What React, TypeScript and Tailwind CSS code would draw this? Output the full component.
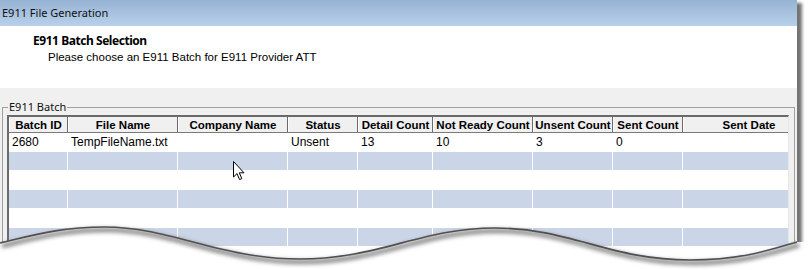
const COLUMNS = [
  { label: "Batch ID", width: 59 },
  { label: "File Name", width: 110 },
  { label: "Company Name", width: 110 },
  { label: "Status", width: 70 },
  { label: "Detail Count", width: 75 },
  { label: "Not Ready Count", width: 100 },
  { label: "Unsent Count", width: 80 },
  { label: "Sent Count", width: 70 },
  { label: "Sent Date", width: 132 },
];

const ROWS: string[][] = [
  ["2680", "TempFileName.txt", "", "Unsent", "13", "10", "3", "0", ""],
  ["", "", "", "", "", "", "", "", ""],
  ["", "", "", "", "", "", "", "", ""],
  ["", "", "", "", "", "", "", "", ""],
  ["", "", "", "", "", "", "", "", ""],
  ["", "", "", "", "", "", "", "", ""],
  ["", "", "", "", "", "", "", "", ""],
];

const WAVE =
  "M0,243 C30,236 60,227 105,227 C170,227 220,259 300,259 C380,259 420,228 495,228 C570,228 610,260 690,260 C740,260 770,250 797,242";

function TornEdge() {
  return (
    <svg
      className="absolute inset-0 pointer-events-none"
      width="808"
      height="270"
      viewBox="0 0 808 270"
      aria-hidden="true"
    >
      <defs>
        <filter id="blur" x="-5%" y="-50%" width="110%" height="200%">
          <feGaussianBlur stdDeviation="2" />
        </filter>
      </defs>
      <path d={`${WAVE} L808,242 L808,270 L0,270 Z`} fill="#ffffff" />
      <path d={WAVE} transform="translate(2,3)" fill="none" stroke="#7a7a7a" strokeWidth="4" filter="url(#blur)" />
      <path d={WAVE} fill="none" stroke="#505050" strokeWidth="1.6" />
    </svg>
  );
}

function Cursor() {
  return (
    <svg className="absolute left-[233px] top-[161px]" width="13" height="20" viewBox="0 0 13 20" aria-hidden="true">
      <path
        d="M0.5,0.5 L0.5,16 L4,12.6 L6.6,18.6 L8.8,17.6 L6.3,11.8 L11,11.8 Z"
        fill="#ffffff"
        stroke="#000000"
        strokeWidth="1"
        strokeLinejoin="miter"
      />
    </svg>
  );
}

export default function App() {
  return (
    <div className="relative w-[808px] h-[270px] bg-white overflow-hidden font-['Liberation_Sans',Arial,sans-serif] text-[12px] text-black">
      <div className="w-[797px] h-[270px] flex flex-col shadow-[5px_3px_3px_rgba(0,0,0,0.55)]">
        <div className="h-[26px] shrink-0 flex items-center pl-[2px] bg-gradient-to-b from-[#97b3d3] to-[#b8d0ea] font-['Noto_Sans',sans-serif] text-[11px] text-[#111]">
          E911 File Generation
        </div>
        <div className="h-[62px] shrink-0 bg-white pt-[5px]">
          <div className="pl-[33px] font-['Noto_Sans',sans-serif] font-bold text-[12px] leading-[20px] tracking-[-0.45px]">
            E911 Batch Selection
          </div>
          <div className="pl-[48px] leading-[12px] text-[11.5px]">
            Please choose an E911 Batch for E911 Provider ATT
          </div>
        </div>
        <div className="flex-1 bg-[#f0f0f0] pt-[14px] px-[2px]">
          <fieldset className="min-w-0 h-[400px] border border-[#a0a0a0] pl-[4px] pr-[5px] pt-[3px]">
            <legend className="ml-[1px] px-[1px] font-['Noto_Sans',sans-serif] text-[11px] leading-[10px] text-[#111]">
              E911 Batch
            </legend>
            <div className="h-[300px] overflow-hidden border-t-2 border-l-2 border-[#6a6a6a] border-r border-r-[#e6e6e6] bg-white">
              <div className="flex w-max h-[16px] bg-[#f0f0f0] border-b border-[#7a7a7a]">
                {COLUMNS.map((c) => (
                  <div
                    key={c.label}
                    style={{ width: c.width }}
                    className="shrink-0 flex items-center justify-center whitespace-nowrap border-r border-[#6a6a6a] border-l border-l-white font-bold text-[11.5px] leading-[14px]"
                  >
                    {c.label}
                  </div>
                ))}
              </div>
              {ROWS.map((row, i) => (
                <div key={i} className={`flex w-max h-[19px] ${i % 2 === 1 ? "bg-[#cbd5e8]" : "bg-white"}`}>
                  {row.map((v, j) => (
                    <div
                      key={j}
                      style={{ width: COLUMNS[j].width }}
                      className="shrink-0 flex items-center pl-[3px] whitespace-nowrap border-r border-b border-white"
                    >
                      {v}
                    </div>
                  ))}
                </div>
              ))}
            </div>
          </fieldset>
        </div>
      </div>
      <Cursor />
      <TornEdge />
    </div>
  );
}
